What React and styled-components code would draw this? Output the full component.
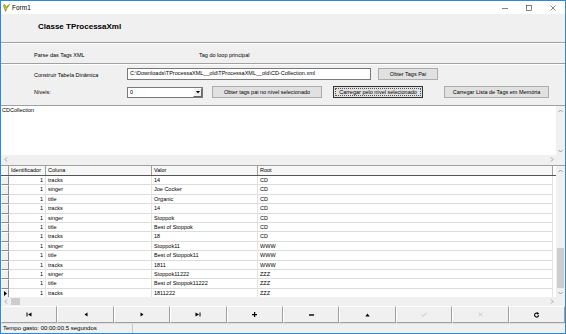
import React from 'react';
import styled, { createGlobalStyle } from 'styled-components';

const rows = [
  ['tracks', '14', 'CD'],
  ['singer', 'Joe Cocker', 'CD'],
  ['title', 'Organic', 'CD'],
  ['tracks', '14', 'CD'],
  ['singer', 'Stoppok', 'CD'],
  ['title', 'Best of Stoppok', 'CD'],
  ['tracks', '18', 'CD'],
  ['singer', 'Stoppok11', 'WWW'],
  ['title', 'Best of Stoppok11', 'WWW'],
  ['tracks', '1811', 'WWW'],
  ['singer', 'Stoppok11222', 'ZZZ'],
  ['title', 'Best of Stoppok11222', 'ZZZ'],
  ['tracks', '1811222', 'ZZZ'],
];

const cols = [
  { key: 'ind', w: 8 },
  { key: 'id', w: 37, title: 'Identificador' },
  { key: 'col', w: 106, title: 'Coluna' },
  { key: 'val', w: 106, title: 'Valor' },
  { key: 'root', w: 295, title: 'Root' },
];

const Chevron = ({ dir }) => {
  const d = {
    up: 'M0.5 3L2.5 1 4.5 3',
    down: 'M0.5 1L2.5 3 4.5 1',
    left: 'M3 0.5L1 2.5 3 4.5',
    right: 'M1 0.5L3 2.5 1 4.5',
  }[dir];
  const vertical = dir === 'up' || dir === 'down';
  return (
    <svg width={vertical ? 5 : 4} height={vertical ? 4 : 5} viewBox={vertical ? '0 0 5 4' : '0 0 4 5'}>
      <path d={d} fill="none" stroke="#8a8a8a" strokeWidth="0.8" />
    </svg>
  );
};

const NavGlyph = ({ kind }) => {
  switch (kind) {
    case 'first':
      return (
        <svg width="6" height="5" viewBox="0 0 6 5">
          <rect x="0.5" y="0.5" width="1" height="4" fill="#000" />
          <path d="M5.5 0.5v4L2 2.5z" fill="#000" />
        </svg>
      );
    case 'prior':
      return (
        <svg width="4" height="5" viewBox="0 0 4 5">
          <path d="M3.5 0.5v4L0.5 2.5z" fill="#000" />
        </svg>
      );
    case 'next':
      return (
        <svg width="4" height="5" viewBox="0 0 4 5">
          <path d="M0.5 0.5v4L3.5 2.5z" fill="#000" />
        </svg>
      );
    case 'last':
      return (
        <svg width="6" height="5" viewBox="0 0 6 5">
          <path d="M0.5 0.5v4L4 2.5z" fill="#000" />
          <rect x="4.5" y="0.5" width="1" height="4" fill="#000" />
        </svg>
      );
    case 'insert':
      return (
        <svg width="5" height="5" viewBox="0 0 5 5">
          <path d="M2 0h1.2v5H2zM0 1.9h5v1.3H0z" fill="#000" />
        </svg>
      );
    case 'delete':
      return (
        <svg width="5" height="2" viewBox="0 0 5 2">
          <rect x="0" y="0.3" width="5" height="1.4" fill="#000" />
        </svg>
      );
    case 'edit':
      return (
        <svg width="5" height="4" viewBox="0 0 5 4">
          <path d="M0.3 3.5L2.5 0.5 4.7 3.5z" fill="#000" />
        </svg>
      );
    case 'post':
      return (
        <svg width="6" height="5" viewBox="0 0 6 5">
          <path d="M0.5 2.8L2.2 4.3 5.5 0.8" fill="none" stroke="#c4c4c4" strokeWidth="1" />
        </svg>
      );
    case 'cancel':
      return (
        <svg width="5" height="5" viewBox="0 0 5 5">
          <path d="M0.7 0.7l3.6 3.6M4.3 0.7L0.7 4.3" fill="none" stroke="#c4c4c4" strokeWidth="0.9" />
        </svg>
      );
    default:
      return (
        <svg width="6" height="6" viewBox="0 0 6 6">
          <path d="M4.6 3.3A2 2 0 1 1 3.6 1.4" fill="none" stroke="#000" strokeWidth="1.1" />
          <path d="M2.8 0L5.2 1.3 3.4 3z" fill="#000" />
        </svg>
      );
  }
};

export default function App() {
  return (
    <>
      <GlobalStyle />
      <Window>
        {/* Title bar */}
        <TitleBar>
          <AppIcon width="7" height="8" viewBox="0 0 7 8">
            <path d="M0.3 1.2L2.6 7.6 3.8 4.6 6.7 0.4 4.4 1.8 3.1 3.6 2 0.6z" fill="#e9c910" stroke="#4d6a12" strokeWidth="0.5" />
          </AppIcon>
          <Caption>Form1</Caption>
          <WinControls>
            <WinButton>
              <svg width="6" height="6" viewBox="0 0 6 6">
                <path d="M0 3.5h6" stroke="#333" strokeWidth="0.6" />
              </svg>
            </WinButton>
            <WinButton>
              <svg width="6" height="6" viewBox="0 0 6 6">
                <rect x="0.5" y="0.5" width="5" height="5" fill="none" stroke="#333" strokeWidth="0.6" />
              </svg>
            </WinButton>
            <WinButton>
              <svg width="6" height="6" viewBox="0 0 6 6">
                <path d="M0.5 0.5l5 5M5.5 0.5l-5 5" stroke="#333" strokeWidth="0.6" />
              </svg>
            </WinButton>
          </WinControls>
        </TitleBar>

        {/* Top panel */}
        <TopPanel>
          <Heading>Classe TProcessaXml</Heading>
          <Etched />
          <InfoRow>
            <InfoLabel $w={165}>Parse das Tags XML</InfoLabel>
            <InfoLabel>Tag do loop principal</InfoLabel>
          </InfoRow>
          <Etched />
          <FormArea>
            <FormRow>
              <FieldLabel $dy={2}>Construir Tabela Dinâmica</FieldLabel>
              <Edit $w={244}>C:\Downloads\TProcessaXML__old\TProcessaXML__old\CD-Collection.xml</Edit>
              <Button $w={60} $ml={7}>Obter Tags Pai</Button>
            </FormRow>
            <FormRow>
              <FieldLabel>Níveis:</FieldLabel>
              <Combo>
                <ComboText>0</ComboText>
                <DropButton>
                  <svg width="4" height="3" viewBox="0 0 4 3">
                    <path d="M0 0h4L2 2.5z" fill="#000" />
                  </svg>
                </DropButton>
              </Combo>
              <Button $w={110} $ml={9}>Obter tags pai no nível selecionado</Button>
              <Button $w={90} $ml={11} $default>Carregar pelo nível selecionado</Button>
              <Button $w={105} $ml={21}>Carregar Lista de Tags em Memória</Button>
            </FormRow>
          </FormArea>
        </TopPanel>

        {/* Memo */}
        <Memo>
          <MemoBody>
            <MemoText>CDCollection</MemoText>
            <VScroll>
              <ArrowV><Chevron dir="up" /></ArrowV>
              <TrackV />
              <ArrowV><Chevron dir="down" /></ArrowV>
            </VScroll>
          </MemoBody>
          <HScrollRow>
            <ArrowH><Chevron dir="left" /></ArrowH>
            <TrackH />
            <ArrowH><Chevron dir="right" /></ArrowH>
            <Corner />
          </HScrollRow>
        </Memo>

        <Splitter />

        {/* Grid */}
        <Grid>
          <GridBody>
            <Table>
              <HeaderRow>
                {cols.map((c) => (
                  <HeaderCell key={c.key} $w={c.w}>{c.title}</HeaderCell>
                ))}
              </HeaderRow>
              {rows.map((r, i) => (
                <DataRow key={i}>
                  <IndicatorCell $w={8}>
                    {i === rows.length - 1 && (
                      <svg width="3" height="5" viewBox="0 0 3 5">
                        <path d="M0 0v5L3 2.5z" fill="#000" />
                      </svg>
                    )}
                  </IndicatorCell>
                  <Cell $w={37} $right>1</Cell>
                  <Cell $w={106}>{r[0]}</Cell>
                  <Cell $w={106}>{r[1]}</Cell>
                  <Cell $w={295}>{r[2]}</Cell>
                </DataRow>
              ))}
            </Table>
            <VScroll>
              <ArrowV><Chevron dir="up" /></ArrowV>
              <TrackV>
                <ThumbV $top={73} $size={40} />
              </TrackV>
              <ArrowV><Chevron dir="down" /></ArrowV>
            </VScroll>
          </GridBody>
          <HScrollRow>
            <ArrowH><Chevron dir="left" /></ArrowH>
            <TrackH>
              <ThumbH $left={1} $size={9} />
            </TrackH>
            <ArrowH><Chevron dir="right" /></ArrowH>
            <Corner />
          </HScrollRow>
        </Grid>

        {/* Navigator */}
        <Navigator>
          {['first', 'prior', 'next', 'last', 'insert', 'delete', 'edit', 'post', 'cancel', 'refresh'].map((k) => (
            <NavButton key={k}>
              <NavGlyph kind={k} />
            </NavButton>
          ))}
        </Navigator>

        {/* Status bar */}
        <StatusBar>
          <StatusPanel $w={132}>Tempo gasto: 00:00:00.5 segundos</StatusPanel>
          <StatusPanel />
        </StatusBar>
      </Window>
    </>
  );
}

const GlobalStyle = createGlobalStyle`
  * { box-sizing: border-box; }
  body {
    margin: 0;
    background: #fff;
    font-family: "Liberation Sans", Arial, sans-serif;
  }
`;

const Window = styled.div`
  width: 566px;
  height: 334px;
  border: 1px solid #2d89d5;
  background: #f0f0f0;
  display: flex;
  flex-direction: column;
  overflow: hidden;
  color: #000;
  font-family: "Liberation Sans", Arial, sans-serif;
`;

const TitleBar = styled.div`
  height: 13px;
  flex: none;
  background: #fff;
  display: flex;
  align-items: center;
`;

const AppIcon = styled.svg`
  flex: none;
  margin-left: 2px;
`;

const Caption = styled.span`
  margin-left: 2px;
  font-size: 6.5px;
  line-height: 13px;
`;

const WinControls = styled.div`
  margin-left: auto;
  display: flex;
  height: 100%;
`;

const WinButton = styled.div`
  width: 24px;
  display: flex;
  align-items: center;
  justify-content: center;
`;

const TopPanel = styled.div`
  height: 91px;
  flex: none;
  display: flex;
  flex-direction: column;
`;

const Heading = styled.div`
  height: 28px;
  padding: 0 0 4px 37px;
  display: flex;
  align-items: center;
  font-size: 8px;
  font-weight: bold;
`;

const Etched = styled.div`
  height: 2px;
  flex: none;
  border-top: 1px solid #a0a0a0;
  border-bottom: 1px solid #fff;
`;

const InfoRow = styled.div`
  height: 19px;
  padding: 3px 0 0 33px;
  display: flex;
  align-items: center;
`;

const InfoLabel = styled.div`
  width: ${(p) => (p.$w ? `${p.$w}px` : 'auto')};
  font-size: 5.5px;
  white-space: nowrap;
`;

const FormArea = styled.div`
  flex: 1;
  padding: 3px 0 0 33px;
  display: flex;
  flex-direction: column;
  gap: 6px;
`;

const FormRow = styled.div`
  height: 12px;
  display: flex;
  align-items: center;
`;

const FieldLabel = styled.div`
  width: 93px;
  flex: none;
  font-size: 5.5px;
  white-space: nowrap;
  padding-top: ${(p) => p.$dy || 0}px;
`;

const Edit = styled.div`
  width: ${(p) => p.$w}px;
  height: 12px;
  flex: none;
  background: #fff;
  border: 1px solid #7a7a7a;
  padding-left: 2px;
  font-size: 5.5px;
  line-height: 9px;
  white-space: nowrap;
  overflow: hidden;
`;

const Button = styled.div`
  width: ${(p) => p.$w}px;
  height: 12px;
  flex: none;
  margin-left: ${(p) => p.$ml || 0}px;
  background: #e1e1e1;
  border: 1px solid ${(p) => (p.$default ? '#333' : '#adadad')};
  outline: ${(p) => (p.$default ? '1px dotted #555' : 'none')};
  outline-offset: -3px;
  display: flex;
  align-items: center;
  justify-content: center;
  font-size: 5.5px;
  white-space: nowrap;
`;

const Combo = styled.div`
  width: 76px;
  height: 11px;
  flex: none;
  background: #fff;
  border: 1px solid #7a7a7a;
  display: flex;
  align-items: stretch;
`;

const ComboText = styled.div`
  flex: 1;
  padding-left: 2px;
  font-size: 5.5px;
  line-height: 9px;
`;

const DropButton = styled.div`
  width: 9px;
  flex: none;
  margin: 0;
  background: #f0f0f0;
  border: 1px solid;
  border-color: #fff #696969 #696969 #fff;
  display: flex;
  align-items: center;
  justify-content: center;
`;

const Memo = styled.div`
  height: 59px;
  flex: none;
  background: #fff;
  border-top: 1px solid #a0a0a0;
  display: flex;
  flex-direction: column;
`;

const MemoBody = styled.div`
  flex: 1;
  min-height: 0;
  display: flex;
`;

const MemoText = styled.div`
  flex: 1;
  padding: 1px 1px;
  font-size: 5.5px;
  line-height: 7px;
`;

const VScroll = styled.div`
  width: 9px;
  flex: none;
  background: #f0f0f0;
  display: flex;
  flex-direction: column;
`;

const ArrowV = styled.div`
  height: 9px;
  flex: none;
  display: flex;
  align-items: center;
  justify-content: center;
`;

const TrackV = styled.div`
  flex: 1;
  min-height: 0;
  padding: 0 1px;
`;

const ThumbV = styled.div`
  margin-top: ${(p) => p.$top}px;
  height: ${(p) => p.$size}px;
  background: #cdcdcd;
`;

const HScrollRow = styled.div`
  height: 9px;
  flex: none;
  background: #f0f0f0;
  display: flex;
`;

const ArrowH = styled.div`
  width: 9px;
  flex: none;
  display: flex;
  align-items: center;
  justify-content: center;
`;

const TrackH = styled.div`
  flex: 1;
  padding: 1px 0;
`;

const ThumbH = styled.div`
  margin-left: ${(p) => p.$left}px;
  width: ${(p) => p.$size}px;
  height: 100%;
  background: #cdcdcd;
`;

const Corner = styled.div`
  width: 9px;
  flex: none;
  background: #f0f0f0;
`;

const Splitter = styled.div`
  height: 2px;
  flex: none;
  background: #f0f0f0;
  border-bottom: 1px solid #a0a0a0;
`;

const Grid = styled.div`
  height: 140px;
  flex: none;
  display: flex;
  flex-direction: column;
  background: #fff;
`;

const GridBody = styled.div`
  flex: 1;
  min-height: 0;
  display: flex;
`;

const Table = styled.div`
  flex: 1;
  overflow: hidden;
  font-size: 5.5px;
`;

const HeaderRow = styled.div`
  height: 10px;
  display: flex;
  border-bottom: 1px solid #555;
`;

const HeaderCell = styled.div`
  width: ${(p) => p.$w}px;
  flex: none;
  background: #f7f7f7;
  border-right: 1px solid #a0a0a0;
  padding-left: 2px;
  line-height: 9px;
  white-space: nowrap;
  overflow: hidden;
`;

const DataRow = styled.div`
  height: 9.4px;
  display: flex;
`;

const Cell = styled.div`
  width: ${(p) => p.$w}px;
  flex: none;
  border-right: 1px solid #e4e4e4;
  border-bottom: 1px solid #dcdcdc;
  padding: 0 2px;
  line-height: 8.4px;
  text-align: ${(p) => (p.$right ? 'right' : 'left')};
  white-space: nowrap;
  overflow: hidden;
`;

const IndicatorCell = styled.div`
  width: ${(p) => p.$w}px;
  flex: none;
  background: #f0f0f0;
  border: 1px solid;
  border-color: #fff #8a8a8a #8a8a8a #fff;
  display: flex;
  align-items: center;
  justify-content: center;
`;

const Navigator = styled.div`
  height: 17px;
  flex: none;
  display: flex;
  background: #f0f0f0;
`;

const NavButton = styled.div`
  flex: 1;
  display: flex;
  align-items: center;
  justify-content: center;
  border: 1px solid;
  border-color: #fff #a0a0a0 #a0a0a0 #fff;
`;

const StatusBar = styled.div`
  height: 10px;
  flex: none;
  display: flex;
  background: #f0f0f0;
  border-top: 1px solid #e0e0e0;
`;

const StatusPanel = styled.div`
  width: ${(p) => (p.$w ? `${p.$w}px` : 'auto')};
  flex: ${(p) => (p.$w ? 'none' : '1')};
  border-right: ${(p) => (p.$w ? '1px solid #c8c8c8' : 'none')};
  padding-left: 2px;
  font-size: 6px;
  line-height: 9px;
  white-space: nowrap;
`;
